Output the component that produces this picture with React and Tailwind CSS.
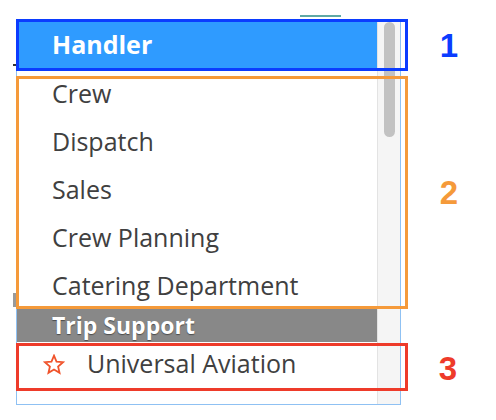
import React from 'react';

const items = ['Crew', 'Dispatch', 'Sales', 'Crew Planning', 'Catering Department'];

function StarIcon() {
    return (
        <svg width="22" height="21" viewBox="0 0 21 20" className="shrink-0">
            <polygon
                points="10.5,1.6 12.9,7.3 19.1,7.8 14.4,11.9 15.8,18 10.5,14.8 5.2,18 6.6,11.9 1.9,7.8 8.1,7.3"
                fill="none"
                stroke="#f0532b"
                strokeWidth="1.7"
                strokeLinejoin="miter"
            />
        </svg>
    );
}

export default function App() {
    return (
        <div className="relative w-[496px] h-[420px] bg-white overflow-hidden font-['Open_Sans',sans-serif]">
            {/* bits of the page peeking from behind the dropdown */}
            <div className="absolute left-[300px] top-[15px] w-[41px] h-[2px] bg-[#5fa9a6]" />
            <div className="absolute left-[13px] top-[64px] w-[4px] h-[2px] bg-[#333]" />
            <div className="absolute left-[13px] top-[293px] w-[3px] h-[14px] bg-[#9a9a9a]" />

            {/* dropdown */}
            <div className="ml-[16px] mt-[19px] w-[385px] h-[386px] border border-[#8fc1f3] flex bg-white">
                <div className="w-[360px] flex flex-col">
                    <div className="h-[289px] overflow-hidden">
                        <div className="h-[50px] bg-[#2f9bff] pl-[35px] flex items-center text-[25px] font-bold text-white">
                            Handler
                        </div>
                        {items.map(item => (
                            <div key={item} className="h-[48px] pl-[35px] flex items-center text-[25px] text-[#404040] whitespace-nowrap">
                                {item}
                            </div>
                        ))}
                    </div>
                    <div className="h-[33px] bg-[#888888] pl-[35px] flex items-center text-[23px] font-bold text-white [text-shadow:0_1px_1px_rgba(0,0,0,0.45)]">
                        Trip Support
                    </div>
                    <div className="h-[44px] pl-[26px] flex items-center gap-[22px] text-[25px] text-[#404040]">
                        <StarIcon />
                        <span>Universal Aviation</span>
                    </div>
                </div>
                {/* scrollbar */}
                <div className="flex-1 bg-[#f5f5f5] border-l border-[#e3e3e3] pt-[2px] pl-[6px]">
                    <div className="w-[11px] h-[115px] rounded-full bg-[#c2c2c2]" />
                </div>
            </div>

            {/* annotation boxes */}
            <div className="absolute left-[16px] top-[19px] w-[392px] h-[52px] border-[3px] border-[#0b3cff]" />
            <div className="absolute left-[16px] top-[76px] w-[392px] h-[233px] border-[3px] border-[#f59a3a]" />
            <div className="absolute left-[16px] top-[343px] w-[392px] h-[48px] border-[3px] border-[#ee3b2a]" />

            {/* annotation numbers */}
            <div className="absolute left-[437px] top-[27px] w-[24px] text-center font-['Liberation_Sans',sans-serif] font-bold text-[33px] leading-[38px] text-[#0b3cff]">1</div>
            <div className="absolute left-[437px] top-[174px] w-[24px] text-center font-['Liberation_Sans',sans-serif] font-bold text-[33px] leading-[38px] text-[#f59a3a]">2</div>
            <div className="absolute left-[436px] top-[350px] w-[24px] text-center font-['Liberation_Sans',sans-serif] font-bold text-[33px] leading-[38px] text-[#ee3b2a]">3</div>
        </div>
    );
}
